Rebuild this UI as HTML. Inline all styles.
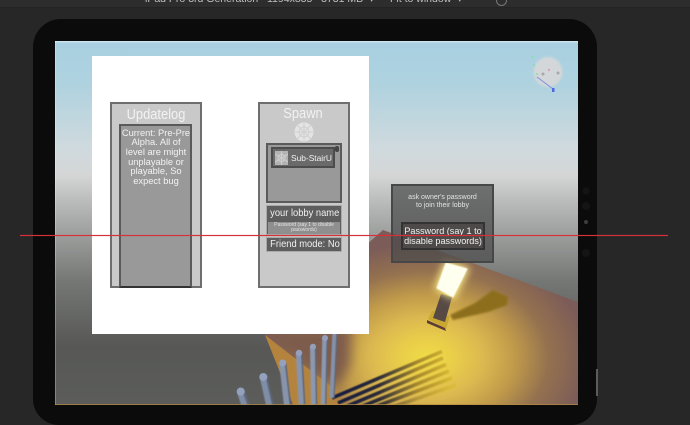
<!DOCTYPE html>
<html>
<head>
<meta charset="utf-8">
<style>
html,body{margin:0;padding:0;background:#272727;}
body{position:relative;width:690px;height:425px;overflow:hidden;font-family:"Liberation Sans",sans-serif;color:#f2f2f2;}
.a{position:absolute;box-sizing:border-box;}
.c{text-align:center;}
.sx{transform:scaleX(.89);transform-origin:50% 50%;white-space:nowrap;}
</style>
</head>
<body>
<div class="a" style="left:0;top:0;width:690px;height:8px;background:#2d2d2d;border-bottom:1px solid #232323;"></div>
<div class="a" style="left:145px;top:-7px;font-size:10.5px;line-height:12px;color:#c0c0c0;white-space:nowrap;">iPad Pro 3rd Generation &nbsp; 1194x835 &nbsp; 3731 MB &nbsp;▾</div>
<div class="a" style="left:390px;top:-7px;font-size:10.5px;line-height:12px;color:#c0c0c0;white-space:nowrap;">Fit to window &nbsp;▾</div>
<div class="a" style="left:496px;top:-5px;width:11px;height:11px;border:1px solid #777;border-radius:50%;"></div>

<div class="a" style="left:33px;top:19px;width:564px;height:406px;background:#0b0b0b;border-radius:28px 28px 26px 26px;"></div>

<svg class="a" style="left:0;top:0;" width="690" height="425" viewBox="0 0 690 425">
<defs>
<linearGradient id="sky" x1="0" y1="41" x2="0" y2="405" gradientUnits="userSpaceOnUse">
<stop offset="0" stop-color="#a8d0e1"/>
<stop offset=".12" stop-color="#afd2df"/>
<stop offset=".3" stop-color="#d0dade"/>
<stop offset=".37" stop-color="#d4d6d6"/>
<stop offset=".47" stop-color="#b0b2b1"/>
<stop offset=".66" stop-color="#757775"/>
<stop offset=".84" stop-color="#575856"/>
<stop offset="1" stop-color="#5c5d5b"/>
</linearGradient>
<radialGradient id="glow" cx="0" cy="0" r="160" gradientUnits="userSpaceOnUse" gradientTransform="translate(427 358) scale(1 .72)">
<stop offset="0" stop-color="#f0dc46"/>
<stop offset=".18" stop-color="#e8cc4a"/>
<stop offset=".35" stop-color="#dcb950"/>
<stop offset=".55" stop-color="#c09a4a"/>
<stop offset=".76" stop-color="#94714f"/>
<stop offset="1" stop-color="#7c5c58"/>
</radialGradient>
<linearGradient id="st" x1="335" y1="0" x2="450" y2="0" gradientUnits="userSpaceOnUse">
<stop offset="0" stop-color="#141a40"/>
<stop offset=".38" stop-color="#2a2a38"/>
<stop offset=".72" stop-color="#a88a2c"/>
<stop offset="1" stop-color="#d8b832"/>
</linearGradient>
<filter id="b1"><feGaussianBlur stdDeviation="1"/></filter>
<filter id="b05"><feGaussianBlur stdDeviation=".5"/></filter>
<filter id="b3" x="-60%" y="-60%" width="220%" height="220%"><feGaussianBlur stdDeviation="4"/></filter>
<filter id="b6" x="-40%" y="-40%" width="180%" height="180%"><feGaussianBlur stdDeviation="6"/></filter>
<clipPath id="scr"><rect x="55" y="41" width="523" height="364"/></clipPath>
<clipPath id="gr"><polygon points="383,230 578,302 578,405 293,405 265,335"/></clipPath>
</defs>
<rect x="55" y="41" width="523" height="364" fill="url(#sky)"/>
<rect x="55" y="41" width="523" height="1.5" fill="#c9e4ef"/>
<rect x="55" y="41" width="1" height="364" fill="#ffffff" opacity=".25"/>
<g clip-path="url(#scr)">
<polygon points="383,230 578,302 578,405 293,405 265,335" fill="url(#glow)"/>
<g clip-path="url(#gr)">
<polygon points="262,332 323,380 338,388 350,365 352,325" fill="#7e5c4c" filter="url(#b6)"/>
<polygon points="265,335 293,405 345,405 338,392 323,380" fill="#b4843f"/>
</g>
<!-- shadow stripes -->
<g stroke="url(#st)" stroke-width="3.6" fill="none" filter="url(#b05)">
<line x1="332" y1="398" x2="442" y2="351.5"/>
<line x1="338" y1="403" x2="443" y2="358"/>
<line x1="345" y1="407" x2="446" y2="364.5"/>
<line x1="358" y1="408" x2="449" y2="371"/>
<line x1="372" y1="408" x2="452" y2="378"/>
<line x1="390" y1="408" x2="456" y2="385" opacity=".7"/>
</g>
<!-- poles -->
<g fill="none" filter="url(#b05)">
<path d="M240.7 392L245.5 406" stroke="#7f8da6" stroke-width="7.5"/>
<path d="M263.5 377L270 406" stroke="#7f8da6" stroke-width="7.5"/>
<path d="M282.7 363L287.5 406" stroke="#8794ac" stroke-width="7"/>
<path d="M299 353L302 406" stroke="#8794ac" stroke-width="6.5"/>
<path d="M313 347L314 406" stroke="#8b98af" stroke-width="6"/>
<path d="M325 338L323.5 406" stroke="#8b98af" stroke-width="5.5"/>
<path d="M335 330L332 398" stroke="#8591a8" stroke-width="5"/>
<path d="M243.5 392L248.5 406" stroke="#5a6478" stroke-width="1.6"/>
<path d="M266.5 377L273 406" stroke="#5a6478" stroke-width="1.6"/>
<path d="M285.5 363L290.5 406" stroke="#5a6478" stroke-width="1.6"/>
<path d="M301.7 353L304.7 406" stroke="#5a6478" stroke-width="1.5"/>
<path d="M315.5 347L316.5 406" stroke="#5a6478" stroke-width="1.4"/>
<path d="M327.2 338L325.7 406" stroke="#5a6478" stroke-width="1.3"/>
<path d="M337 330L334 398" stroke="#5a6478" stroke-width="1.2"/>
</g>
<g fill="#93a1be">
<circle cx="240.7" cy="391.5" r="4"/>
<circle cx="263.3" cy="377" r="4"/>
<circle cx="282.7" cy="363" r="3.5"/>
<circle cx="299" cy="353" r="3.2"/>
<circle cx="313" cy="346.7" r="3"/>
<circle cx="325" cy="338" r="3"/>
</g>
<!-- lamp shadow -->
<polygon points="450,315 475,303 493,290 508,297 507,305 488,312 453,320" fill="#8c6e1e" filter="url(#b1)"/>
<!-- lamp -->
<polygon points="432,311 436,311 449,316 449,320 446,329 428,319" fill="#c9a832"/>
<polygon points="427,320 445,328 446,331 427,323" fill="#5e3d35"/>
<polygon points="441,294 452,297 445,322 433,318" fill="#574a45"/>
<polygon points="446,263 467,269 453,297 437,288" fill="#fff08a" stroke="#fff08a" stroke-width="4" filter="url(#b3)"/>
<polygon points="446,263 467,269 453,297 437,288" fill="#fffff0" stroke="#fffff0" stroke-width="1" filter="url(#b05)"/>
<!-- compass -->
<ellipse cx="548" cy="72" rx="14.5" ry="15" fill="#d3d7da" filter="url(#b1)"/>
<circle cx="549" cy="70" r="1.2" fill="#d8a6ac"/>
<circle cx="543" cy="74" r="1.5" fill="#a8a8a8"/>
<circle cx="558" cy="73" r="1.5" fill="#a8a8a8"/>
<line x1="537" y1="77" x2="553" y2="89" stroke="#7d92e0" stroke-width="1"/>
<rect x="552" y="88" width="2.5" height="4" fill="#4f6ae0"/>
<circle cx="532.5" cy="57" r="1" fill="#7fe0a8"/>
<circle cx="534" cy="65" r="1" fill="#7fe0a8"/>
<circle cx="537" cy="74" r="1" fill="#7fe0a8"/>
</g>
<rect x="55" y="404" width="523" height="1" fill="#b48a40" opacity=".7"/>
<!-- side sensors -->
<circle cx="586" cy="191" r="3.5" fill="#141414"/>
<circle cx="586" cy="206" r="4" fill="#141414"/>
<circle cx="586" cy="222" r="2" fill="#3c3c3c"/>
<circle cx="586" cy="253" r="4" fill="#141414"/>
<rect x="596" y="369" width="2" height="27" fill="#5c5c5c"/>
</svg>

<!-- white panel -->
<div class="a" style="left:92px;top:56px;width:277px;height:277.5px;background:#fff;"></div>

<!-- updatelog -->
<div class="a" style="left:110px;top:102px;width:92px;height:186px;background:#c9c9c9;border:2.5px solid #6e6e6e;"></div>
<div class="a c sx" style="left:110px;top:107px;width:92px;font-size:14.5px;line-height:17px;">Updatelog</div>
<div class="a" style="left:119px;top:124px;width:73px;height:164px;background:#999;border:2.5px solid #5a5a5a;border-bottom-color:#333;"></div>
<div class="a c" style="left:120px;top:128.5px;width:72px;font-size:9.3px;line-height:9.7px;">Current: Pre-Pre<br>Alpha. All of<br>level are might<br>unplayable or<br>playable, So<br>expect bug</div>

<!-- spawn -->
<div class="a" style="left:258px;top:102px;width:92px;height:186px;background:#c9c9c9;border:2.5px solid #6e6e6e;"></div>
<div class="a c sx" style="left:258px;top:105.5px;width:90px;font-size:14.5px;line-height:17px;">Spawn</div>
<svg class="a" style="left:294px;top:122px;" width="20" height="20" viewBox="0 0 20 20">
<circle cx="10" cy="10" r="9.5" fill="#e4e4e4"/>
<g stroke="#d0d0d0" stroke-width="1" fill="none">
<path d="M10 1L10 19M1 10L19 10M3.5 3.5L16.5 16.5M16.5 3.5L3.5 16.5"/>
<circle cx="10" cy="10" r="5"/>
</g>
</svg>
<div class="a" style="left:266px;top:143px;width:76px;height:60px;background:#999;border:2.5px solid #5a5a5a;"></div>
<div class="a" style="left:271px;top:147px;width:64px;height:21px;background:#6a6a6a;border:2px solid #4c4c4c;"></div>
<div class="a" style="left:335px;top:146px;width:4px;height:6px;background:#444;border-radius:2px;"></div>
<svg class="a" style="left:275px;top:151px;" width="13" height="14" viewBox="0 0 13 14">
<rect width="13" height="14" fill="#b3b3b3"/>
<g stroke="#cfcfcf" stroke-width="1" fill="none"><path d="M0 3L13 11M0 11L13 3M6.5 0V14"/><circle cx="6.5" cy="7" r="3.5"/></g>
</svg>
<div class="a" style="left:291px;top:152px;font-size:8.4px;line-height:12px;white-space:nowrap;">Sub-StairU</div>

<div class="a" style="left:266px;top:205px;width:76px;height:30px;background:#5e5e5e;border:1px solid #aaa;"></div>
<div class="a c sx" style="left:266px;top:206px;width:76px;font-size:10.5px;line-height:14px;">your lobby name</div>
<div class="a" style="left:268px;top:222px;width:72px;height:12px;background:#8f8f8f;"></div>
<div class="a c" style="left:268px;top:222.5px;width:72px;font-size:5px;line-height:5.5px;color:#e4e4e4;">Password (say 1 to disable<br>passwords)</div>
<div class="a" style="left:266px;top:237px;width:76px;height:15px;background:#5e5e5e;border:1px solid #aaa;"></div>
<div class="a c sx" style="left:266px;top:238px;width:76px;font-size:10.5px;line-height:13px;">Friend mode: No</div>

<!-- password panel -->
<div class="a" style="left:391px;top:184px;width:103px;height:79px;background:rgba(75,75,75,.72);border:2.5px solid #474747;"></div>
<div class="a c" style="left:391px;top:194px;width:103px;font-size:7px;line-height:8px;color:#e2e2e2;">ask owner's password<br>to join their lobby</div>
<div class="a" style="left:401px;top:222px;width:84px;height:28px;background:#4e4a4a;border:2px solid #333;"></div>
<div class="a c" style="left:401px;top:226px;width:84px;font-size:9.1px;line-height:10px;">Password (say 1 to<br>disable passwords)</div>

<!-- red guide -->
<div class="a" style="left:20px;top:235px;width:648px;height:1px;background:#d8303a;box-shadow:0 0 1px rgba(208,52,58,.6);"></div>
</body>
</html>
